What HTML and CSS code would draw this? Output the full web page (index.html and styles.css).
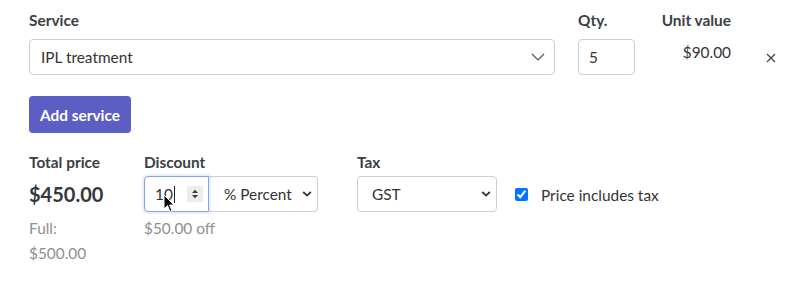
FILE: index.html
```html
<!DOCTYPE html>
<html>
<head>
<meta charset="utf-8">
<link rel="stylesheet" href="styles.css">
</head>
<body>
<div class="form">
  <div class="service-row">
    <div class="field col-service">
      <div class="label">Service</div>
      <div class="select select-service">
        <span>IPL treatment</span>
        <svg class="chev-thin" width="14" height="8" viewBox="0 0 14 8"><path d="M1 1 L7 7 L13 1" fill="none" stroke="#555" stroke-width="1.2"/></svg>
      </div>
    </div>
    <div class="field col-qty">
      <div class="label">Qty.</div>
      <div class="input input-qty">5</div>
    </div>
    <div class="field col-unit">
      <div class="label">Unit value</div>
      <div class="unit-val">$90.00</div>
    </div>
    <div class="remove">
      <svg width="10" height="10" viewBox="0 0 10 10"><path d="M1 1 L9 9 M9 1 L1 9" stroke="#444" stroke-width="1.3" fill="none"/></svg>
    </div>
  </div>

  <button class="add-btn">Add service</button>

  <div class="totals-row">
    <div class="field col-total">
      <div class="label">Total price</div>
      <div class="total-val">$450.00</div>
      <div class="hint">Full:<br>$500.00</div>
    </div>
    <div class="field col-discount">
      <div class="label">Discount</div>
      <div class="discount-group">
        <div class="num-input">
          <span class="num-text">10</span><span class="caret"></span>
          <span class="spinner">
            <svg width="10" height="12" viewBox="0 0 10 12"><path d="M5 1.8 L8 5 L2 5 Z M5 10.2 L8 7 L2 7 Z" fill="#3a3a3a"/></svg>
          </span>
          <svg class="cursor" width="12" height="19" viewBox="0 0 12 19"><path d="M1 1 L1 15 L4.5 11.5 L7 17.5 L9 16.6 L6.6 11 L11 11 Z" fill="#000" stroke="#fff" stroke-width="1"/></svg>
        </div>
        <div class="select select-native select-percent">
          <span>% Percent</span>
          <svg class="chev-bold" width="10" height="6" viewBox="0 0 10 6"><path d="M1.2 1 L5 4.6 L8.8 1" fill="none" stroke="#333" stroke-width="1.8"/></svg>
        </div>
      </div>
      <div class="hint">$50.00 off</div>
    </div>
    <div class="field col-tax">
      <div class="label">Tax</div>
      <div class="select select-native select-tax">
        <span>GST</span>
        <svg class="chev-bold" width="10" height="6" viewBox="0 0 10 6"><path d="M1.2 1 L5 4.6 L8.8 1" fill="none" stroke="#333" stroke-width="1.8"/></svg>
      </div>
    </div>
    <label class="check">
      <input type="checkbox" checked>
      <span>Price includes tax</span>
    </label>
  </div>
</div>
</body>
</html>
```

FILE: styles.css
```css
* { box-sizing: border-box; }
html, body { margin: 0; padding: 0; background: #fff; }
body {
  font-family: Lato, "Open Sans", sans-serif;
  font-size: 15.4px;
  color: #333;
}
.form {
  padding: 11px 0 0 29px;
}
.label {
  font-weight: 700;
  font-size: 15.4px;
  line-height: 18px;
  color: #3b4045;
}
.service-row {
  display: flex;
  align-items: flex-start;
}
.col-service .label,
.col-qty .label,
.col-unit .label { margin-bottom: 10px; }
.col-service { width: 526px; }
.col-qty { width: 57px; margin-left: 23px; }
.col-unit { width: 70px; margin-left: 26px; text-align: right; }
.select {
  display: flex;
  align-items: center;
  justify-content: space-between;
  height: 36px;
  border: 1px solid #cfcfcf;
  border-radius: 4px;
  background: #fff;
  color: #333;
}
.select-service { padding: 0 9px 0 11px; }
.input {
  height: 36px;
  border: 1px solid #cfcfcf;
  border-radius: 4px;
  display: flex;
  align-items: center;
  padding-left: 10px;
}
.unit-val {
  padding-top: 4px;
  line-height: 18px;
  color: #333;
}
.remove {
  margin-left: 35px;
  margin-top: 42px;
  width: 20px;
  height: 10px;
  display: flex;
  align-items: center;
}
.add-btn {
  margin-top: 21px;
  display: block;
  height: 37px;
  padding: 0 11px;
  background: #5c5ec4;
  border: none;
  border-radius: 4px;
  color: #fff;
  font-family: inherit;
  font-weight: 700;
  font-size: 15.4px;
}
.totals-row {
  margin-top: 20px;
  display: flex;
  align-items: flex-start;
}
.totals-row .label { margin-bottom: 5px; }
.col-total { width: 115px; }
.total-val {
  font-size: 20px;
  font-weight: 700;
  line-height: 36px;
  color: #33383d;
}
.hint {
  margin-top: 4px;
  line-height: 25px;
  color: #8f8f8f;
}
.col-discount { width: 174px; }
.discount-group {
  display: flex;
  height: 36px;
}
.num-input {
  position: relative;
  width: 65px;
  height: 36px;
  border: 1px solid #7aa9e6;
  border-radius: 4px 0 0 4px;
  box-shadow: 0 0 0 2px rgba(120, 170, 235, 0.18);
  display: flex;
  align-items: center;
  padding-left: 10px;
  background: #fff;
}
.num-text { color: #333; }
.caret {
  width: 1px;
  height: 17px;
  background: #222;
  margin-left: 1px;
}
.spinner {
  margin-left: 12px;
  width: 16px;
  height: 16px;
  background: #ececec;
  display: flex;
  align-items: center;
  justify-content: center;
}
.cursor {
  position: absolute;
  left: 18px;
  top: 17px;
}
.select-percent {
  width: 109px;
  border-left: none;
  border-radius: 0 4px 4px 0;
  padding: 0 5px 0 15px;
}
.col-tax { width: 140px; margin-left: 39px; }
.select-tax { padding: 0 5px 0 14px; }
.check {
  display: flex;
  align-items: center;
  margin-left: 18px;
  margin-top: 23px;
  height: 37px;
  color: #333;
}
.check input {
  margin: 0 13px 0 0;
  width: 13px;
  height: 13px;
}
```
